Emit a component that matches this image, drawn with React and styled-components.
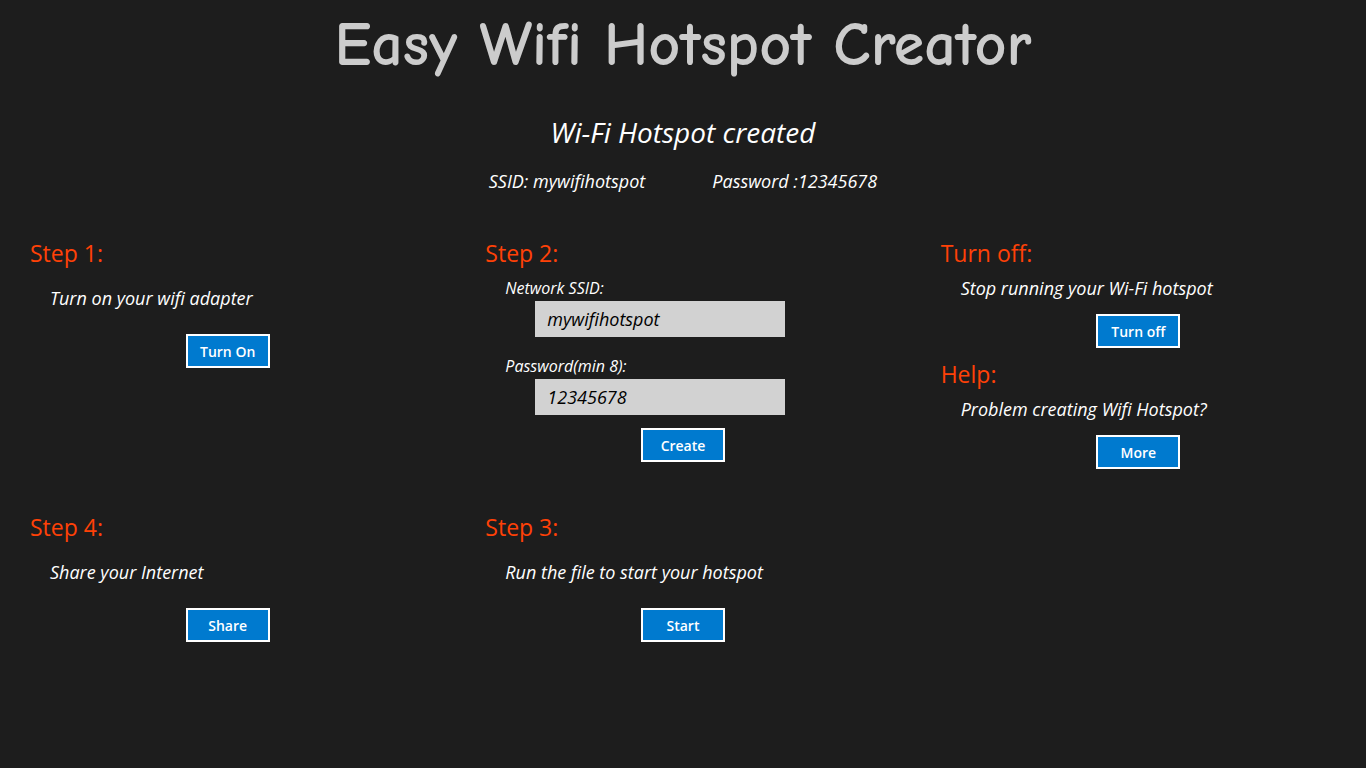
import React, { useState } from "react";
import styled, { createGlobalStyle } from "styled-components";

const GlobalStyle = createGlobalStyle`
  *, *::before, *::after { box-sizing: border-box; }
  body {
    margin: 0;
    background: #1d1d1d;
    color: #fff;
    font-family: "Segoe UI", "Open Sans", "Noto Sans", sans-serif;
  }
`;

const Page = styled.main`
  min-height: 100vh;
  padding-top: 4px;
`;

const Header = styled.header`
  display: flex;
  flex-direction: column;
  align-items: center;
  font-style: italic;
`;

const Title = styled.h1`
  margin: 0;
  color: #ccc;
  font: normal 700 62px/82px "Comic Sans MS", "Comic Neue", "Noto Sans", sans-serif;
`;

const Status = styled.p`
  margin: 28px 0 0;
  font-size: 28px;
  line-height: 36px;
`;

const Credentials = styled.div`
  display: flex;
  gap: 67px;
  margin-top: 19px;
  font-size: 18px;
  line-height: 24px;
`;

const Steps = styled.div`
  display: grid;
  grid-template-columns: repeat(3, 1fr);
  row-gap: 42px;
  margin-top: 44px;
`;

const Column = styled.div`
  display: flex;
  flex-direction: column;
  gap: 10px;
`;

const Panel = styled.section`
  display: flex;
  flex-direction: column;
`;

const Heading = styled.h2`
  margin: 0;
  padding-left: 30px;
  color: #ff4107;
  font-size: 23px;
  font-weight: 400;
  line-height: 32px;
`;

const Text = styled.p`
  margin: ${(p) => (p.$compact ? "7px 0 14px" : "17px 0 24px")};
  padding-left: 50px;
  font-size: 18px;
  font-style: italic;
  line-height: 24px;
`;

const Form = styled.form`
  display: flex;
  flex-direction: column;
  gap: 19px;
  margin: 9px 0 13px;
`;

const Field = styled.div`
  display: flex;
  flex-direction: column;
  gap: 3px;
  font-style: italic;
`;

const Label = styled.label`
  padding-left: 50px;
  font-size: 16px;
  line-height: 20px;
`;

const Input = styled.input`
  width: 250px;
  height: 36px;
  margin-left: 80px;
  padding: 0 12px;
  border: 0;
  border-radius: 0;
  background: #d2d2d2;
  color: #000;
  font: inherit;
  font-size: 18px;
`;

const Button = styled.button`
  align-self: center;
  width: 84px;
  height: 34px;
  padding: 2px 0 0;
  border: 2px solid #fff;
  background: #007acf;
  color: #fff;
  font: inherit;
  font-size: 14px;
  font-weight: 600;
  line-height: 20px;
`;

function Step({ title, text, action, compact }) {
  return (
    <Panel>
      <Heading>{title}</Heading>
      <Text $compact={compact}>{text}</Text>
      <Button type="button">{action}</Button>
    </Panel>
  );
}

export default function App() {
  const [ssid, setSsid] = useState("mywifihotspot");
  const [password, setPassword] = useState("12345678");

  return (
    <Page>
      <GlobalStyle />
      <Header>
        <Title>Easy Wifi Hotspot Creator</Title>
        <Status>Wi-Fi Hotspot created</Status>
        <Credentials>
          <span>SSID: {ssid}</span>
          <span>Password :{password}</span>
        </Credentials>
      </Header>
      <Steps>
        <Step title="Step 1:" text="Turn on your wifi adapter" action="Turn On" />
        <Panel>
          <Heading>Step 2:</Heading>
          <Form id="hotspot" onSubmit={(e) => e.preventDefault()}>
            <Field>
              <Label htmlFor="ssid">Network SSID:</Label>
              <Input id="ssid" value={ssid} onChange={(e) => setSsid(e.target.value)} />
            </Field>
            <Field>
              <Label htmlFor="password">Password(min 8):</Label>
              <Input id="password" value={password} onChange={(e) => setPassword(e.target.value)} />
            </Field>
          </Form>
          <Button type="submit" form="hotspot">Create</Button>
        </Panel>
        <Column>
          <Step compact title="Turn off:" text="Stop running your Wi-Fi hotspot" action="Turn off" />
          <Step compact title="Help:" text="Problem creating Wifi Hotspot?" action="More" />
        </Column>
        <Step title="Step 4:" text="Share your Internet" action="Share" />
        <Step title="Step 3:" text="Run the file to start your hotspot" action="Start" />
      </Steps>
    </Page>
  );
}
